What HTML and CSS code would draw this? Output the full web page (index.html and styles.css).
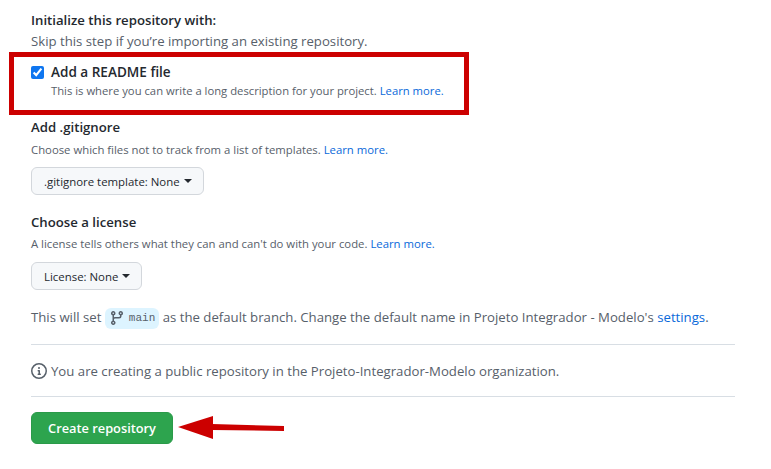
FILE: index.html
```html
<!DOCTYPE html>
<html lang="en">
<head>
  <meta charset="UTF-8" />
  <meta name="viewport" content="width=device-width, initial-scale=1" />
  <title>New repository</title>
  <link rel="stylesheet" href="styles.css">
</head>
<body>

<div class="form-container">
  <div class="init-head">
    <h3>Initialize this repository with:</h3>
    <p class="note">Skip this step if you’re importing an existing repository.</p>
  </div>

  <div class="readme">
    <input type="checkbox" class="check" checked />
    <div>
      <div class="readme-title">Add a README file</div>
      <p class="hint">This is where you can write a long description for your project. <a href="#">Learn more.</a></p>
    </div>
  </div>

  <div class="group group-ignore">
    <h3>Add .gitignore</h3>
    <p class="hint">Choose which files not to track from a list of templates. <a href="#">Learn more.</a></p>
    <button class="btn-select">.gitignore template: None<span class="caret"></span></button>
  </div>

  <div class="group group-license">
    <h3>Choose a license</h3>
    <p class="hint">A license tells others what they can and can't do with your code. <a href="#">Learn more.</a></p>
    <button class="btn-select">License: None<span class="caret"></span></button>
  </div>

  <p class="note branch">This will set <span class="branch-pill"><svg width="16" height="16" viewBox="0 0 16 16" fill="currentColor"><path fill-rule="evenodd" d="M11.75 2.5a.75.75 0 100 1.5.75.75 0 000-1.5zm-2.25.75a2.25 2.25 0 113 2.122V6A2.5 2.5 0 0110 8.5H6a1 1 0 00-1 1v1.128a2.251 2.251 0 11-1.5 0V5.372a2.25 2.25 0 111.5 0v1.836A2.492 2.492 0 016 7h4a1 1 0 001-1v-.628A2.25 2.25 0 019.5 3.25zM4.25 12a.75.75 0 100 1.5.75.75 0 000-1.5zM3.5 3.25a.75.75 0 111.5 0 .75.75 0 01-1.5 0z"></path></svg><code>main</code></span> as the default branch. Change the default name in Projeto Integrador - Modelo's <a href="#">settings</a>.</p>

  <div class="public-note note">
    <svg width="16" height="16" viewBox="0 0 16 16" fill="currentColor"><path fill-rule="evenodd" d="M8 1.5a6.5 6.5 0 100 13 6.5 6.5 0 000-13zM0 8a8 8 0 1116 0A8 8 0 010 8zm6.5-.25A.75.75 0 017.25 7h1a.75.75 0 01.75.75v2.75h.25a.75.75 0 010 1.5h-2a.75.75 0 010-1.5h.25v-2h-.25a.75.75 0 01-.75-.75zM8 6a1 1 0 100-2 1 1 0 000 2z"></path></svg>
    <span>You are creating a public repository in the Projeto-Integrador-Modelo organization.</span>
  </div>

  <button class="btn-create">Create repository</button>
</div>

<!-- annotations drawn over the form -->
<div class="mark-box"></div>
<svg class="mark-arrow" width="108" height="26" viewBox="0 0 108 26">
  <polygon points="0,12 35,1 35,24" fill="#cc0000"></polygon>
  <polygon points="34,9 106,11 106,16 34,15" fill="#cc0000"></polygon>
</svg>

</body>
</html>
```

FILE: styles.css
```css
body {
  font-family: "Open Sans", Arial, sans-serif;
  background: #fff;
  color: #24292f;
  margin: 0;
}

.form-container {
  padding: 11px 36px 0 31px;
  position: relative;
}

h3 {
  font-size: 13.2px;
  line-height: 18px;
  font-weight: 600;
  margin: 0;
}

p {
  margin: 0;
}

a {
  color: #0969da;
  text-decoration: none;
}

.note {
  font-size: 13.2px;
  line-height: 20px;
  color: #57606a;
}

.init-head .note {
  margin-top: 2px;
}

.hint {
  font-size: 11.33px;
  line-height: 16px;
  color: #57606a;
}

.readme {
  display: flex;
  gap: 7px;
  margin-top: 12px;
}

.check {
  width: 13px;
  height: 13px;
  margin: 3px 0 0;
  accent-color: #0f76f0;
}

.readme-title {
  font-size: 13.55px;
  line-height: 18px;
  font-weight: 600;
}

.readme .hint {
  margin-top: 2px;
  font-size: 11.27px;
}

.group-ignore {
  margin-top: 19px;
}

.group-ignore .hint {
  margin-top: 6px;
}

.group-license .hint {
  margin-top: 5px;
}

.btn-select {
  display: flex;
  align-items: center;
  height: 28px;
  margin-top: 9px;
  padding: 0 11px 0 12px;
  font-family: inherit;
  font-size: 11.42px;
  color: #24292f;
  background: #f6f8fa;
  border: 1px solid #d3d7dc;
  border-radius: 6px;
}

.group-license .btn-select {
  margin-top: 10px;
}

.caret {
  width: 0;
  height: 0;
  margin-left: 4px;
  border-top: 4px solid #24292f;
  border-left: 4px solid transparent;
  border-right: 4px solid transparent;
}

.group-license {
  margin-top: 18px;
}

.branch {
  margin-top: 17px;
  padding-bottom: 15px;
  border-bottom: 1px solid #d8dee4;
}

.branch-pill {
  display: inline-flex;
  align-items: center;
  gap: 4px;
  height: 21px;
  padding: 0 4px;
  color: #57606a;
  background: #ddf4ff;
  border-radius: 6px;
  vertical-align: middle;
}

.branch-pill code {
  font-family: "Liberation Mono", monospace;
  font-size: 11px;
}

.public-note {
  display: flex;
  align-items: center;
  gap: 4px;
  height: 49px;
  padding-top: 2px;
  border-bottom: 1px solid #d8dee4;
}

.btn-create {
  display: block;
  width: 142px;
  height: 32px;
  margin-top: 15px;
  font-family: inherit;
  font-size: 12.8px;
  font-weight: 600;
  color: #fff;
  background: #2da44e;
  border: 1px solid #2a9a49;
  border-radius: 6px;
}

.mark-box {
  position: absolute;
  left: 9px;
  top: 52px;
  width: 450px;
  height: 53px;
  border: 5px solid #cc0000;
}

.mark-arrow {
  position: absolute;
  left: 178px;
  top: 415px;
}
```
